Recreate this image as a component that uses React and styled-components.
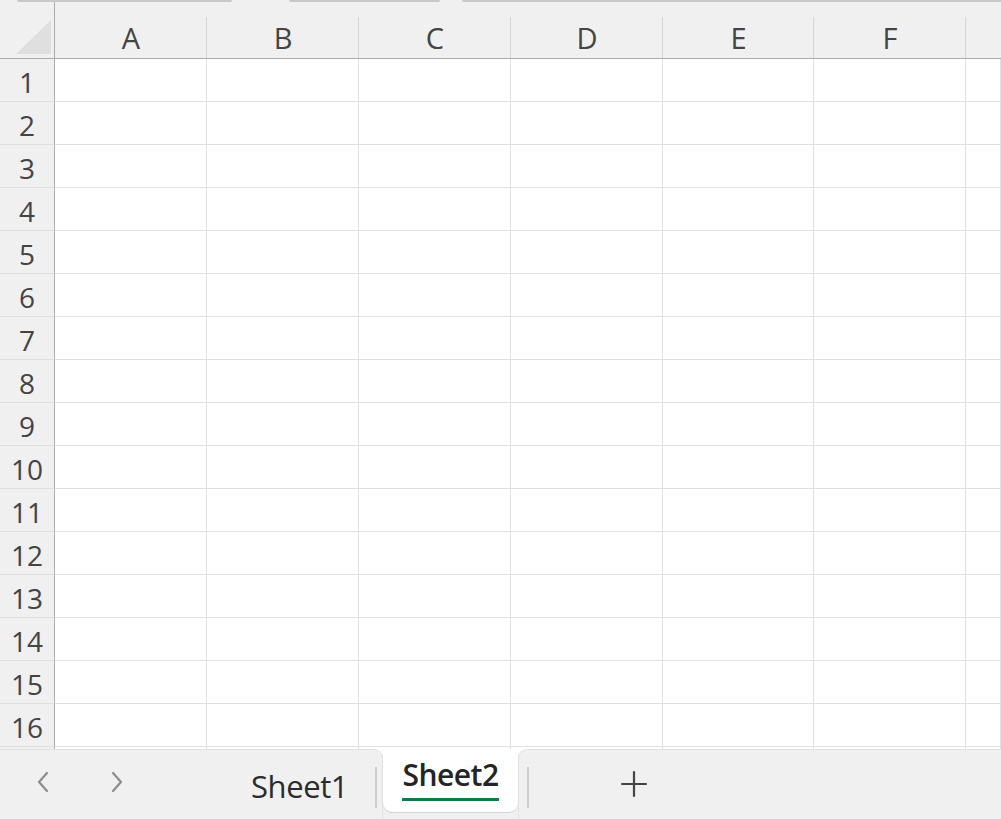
import React from "react";
import styled, { createGlobalStyle } from "styled-components";

const Global = createGlobalStyle`
  html, body { margin: 0; padding: 0; background: #ffffff; }
  body { font-family: "Open Sans", "Noto Sans", sans-serif; overflow: hidden; }
  * { box-sizing: border-box; }
`;

const Page = styled.div`
  width: 1001px;
  height: 819px;
  display: flex;
  flex-direction: column;
  overflow: hidden;
  background: #ffffff;
`;

const Sheet = styled.div`
  height: 749px;
  overflow: hidden;
  display: grid;
  grid-template-columns: 55px repeat(4, 152px) 151px 152px 1fr;
  grid-auto-rows: 43px;
  grid-template-rows: 59px;
`;

const HeaderCell = styled.div`
  position: relative;
  background: #f0f0f0;
  border-bottom: 1px solid #ababab;
  display: flex;
  align-items: center;
  justify-content: center;
  padding-top: 16px;
  font-size: 29px;
  color: #444444;
  &::after {
    content: "";
    position: absolute;
    right: 0;
    top: 17px;
    bottom: 0;
    width: 1px;
    background: ${(p) => (p.$noLine ? "transparent" : "#d6d6d6")};
  }
`;

const TopBar = styled.div`
  position: absolute;
  top: 0;
  height: 2px;
  border-radius: 0 0 2px 2px;
  background: #c9c9c9;
  z-index: 2;
`;

const Corner = styled(HeaderCell)`
  border-right: 1px solid #ababab;
  &::after { display: none; }
`;

const Triangle = styled.div`
  position: absolute;
  left: 16px;
  top: 20px;
  width: 35px;
  height: 34px;
  background: #dfdfdf;
  clip-path: polygon(100% 0, 100% 100%, 0 100%);
`;

const RowHead = styled.div`
  background: #f0f0f0;
  border-right: 1px solid #ababab;
  border-bottom: 1px solid #dedede;
  display: flex;
  align-items: center;
  justify-content: center;
  padding-top: 4px;
  font-size: 28px;
  color: #444444;
`;

const Cell = styled.div`
  background: #ffffff;
  border-right: 1px solid #e1e1e1;
  border-bottom: 1px solid #e1e1e1;
`;

const TabBar = styled.div`
  height: 70px;
  display: flex;
  background: #ffffff;
`;

const LeftPanel = styled.div`
  width: 383px;
  background: #f0f0f0;
  border-top: 1px solid #e2e2e2;
  border-right: 1px solid #e2e2e2;
  border-top-right-radius: 9px;
  display: flex;
  align-items: center;
  padding-left: 6px;
`;

const RightPanel = styled.div`
  flex: 1;
  background: #f0f0f0;
  border-top: 1px solid #e2e2e2;
  border-left: 1px solid #e2e2e2;
  border-top-left-radius: 9px;
  display: flex;
  align-items: center;
`;

const Middle = styled.div`
  width: 135px;
  background: #f0f0f0;
  display: flex;
  flex-direction: column;
`;

const ActiveTab = styled.div`
  height: 63px;
  background: #ffffff;
  border-bottom-left-radius: 9px;
  border-bottom-right-radius: 9px;
  box-shadow: 0 1px 1px rgba(0,0,0,0.12);
  display: flex;
  flex-direction: column;
  align-items: center;
  padding-top: 8px;
`;

const ActiveLabel = styled.div`
  font-size: 30px;
  font-weight: 600;
  color: #242424;
  line-height: 36px;
  letter-spacing: -0.5px;
  padding-bottom: 5px;
  border-bottom: 3px solid #107c41;
`;

const NavButton = styled.div`
  width: 74px;
  display: flex;
  justify-content: center;
  align-items: center;
  height: 40px;
  margin-top: -6px;
`;

const TabLabel = styled.div`
  font-size: 31px;
  color: #2b2b2b;
  letter-spacing: -0.4px;
  margin-left: 97px;
  margin-top: 2px;
`;

const Separator = styled.div`
  width: 2px;
  height: 41px;
  background: #cdcdcd;
  margin-left: ${(p) => p.$ml}px;
  margin-top: 5px;
  flex: none;
`;

const PlusButton = styled.div`
  margin-left: 91px;
  margin-top: -2px;
  display: flex;
  align-items: center;
`;

const cols = ["A", "B", "C", "D", "E", "F", ""];
const rows = Array.from({ length: 17 }, (_, i) => i + 1);

const Chevron = ({ dir }) => (
  <svg width="16" height="22" viewBox="0 0 16 22">
    <path
      d={dir === "left" ? "M12 2 L4 11 L12 20" : "M4 2 L12 11 L4 20"}
      fill="none"
      stroke="#8c8c8c"
      strokeWidth="2.2"
      strokeLinecap="round"
      strokeLinejoin="round"
    />
  </svg>
);

const Plus = () => (
  <svg width="28" height="28" viewBox="0 0 28 28">
    <path d="M14 2 V26 M2 14 H26" stroke="#444" strokeWidth="2.2" strokeLinecap="round" />
  </svg>
);

const HeaderRow = styled.div`
  display: contents;
`;

const TopWrap = styled.div`
  position: relative;
`;

export default function App() {
  return (
    <>
      <Global />
      <Page>
        <TopWrap>
          <TopBar style={{ left: 17, width: 215 }} />
          <TopBar style={{ left: 289, width: 151 }} />
          <TopBar style={{ left: 462, width: 545 }} />
        </TopWrap>
        <Sheet>
          <HeaderRow>
            <Corner>
              <Triangle />
            </Corner>
            {cols.map((c, i) => (
              <HeaderCell key={i} $noLine={i === cols.length - 1}>
                {c}
              </HeaderCell>
            ))}
          </HeaderRow>
          {rows.map((r) => (
            <React.Fragment key={r}>
              <RowHead>{r <= 16 ? r : ""}</RowHead>
              {cols.map((c, i) => (
                <Cell key={i} />
              ))}
            </React.Fragment>
          ))}
        </Sheet>
        <TabBar>
          <LeftPanel>
            <NavButton>
              <Chevron dir="left" />
            </NavButton>
            <NavButton>
              <Chevron dir="right" />
            </NavButton>
            <TabLabel>Sheet1</TabLabel>
            <Separator $ml={27} />
          </LeftPanel>
          <Middle>
            <ActiveTab>
              <ActiveLabel>Sheet2</ActiveLabel>
            </ActiveTab>
          </Middle>
          <RightPanel>
            <Separator $ml={8} />
            <PlusButton>
              <Plus />
            </PlusButton>
          </RightPanel>
        </TabBar>
      </Page>
    </>
  );
}
